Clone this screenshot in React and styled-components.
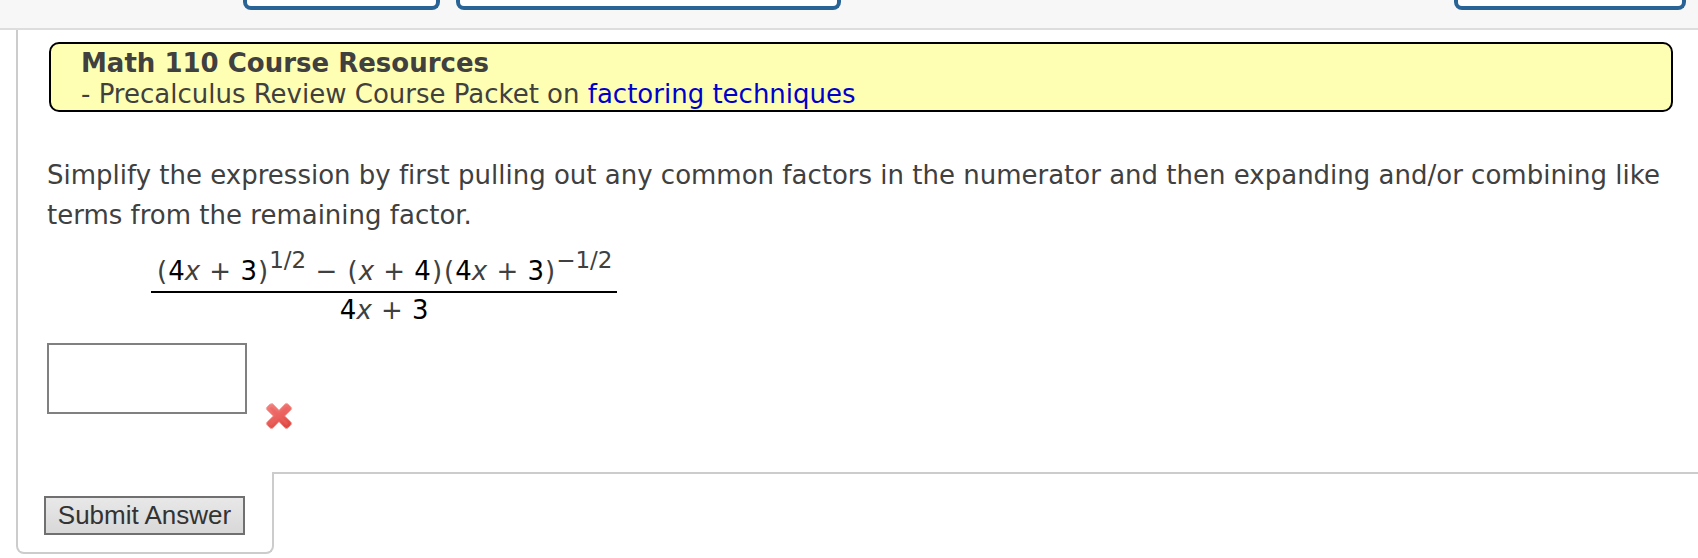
import { useState } from 'react';
import styled, { createGlobalStyle } from 'styled-components';

const colors = {
  text: '#404040',
  border: '#cccccc',
  accent: '#2a6496',
  link: '#0000cc',
};

const GlobalStyle = createGlobalStyle`
  *,
  *::before,
  *::after {
    box-sizing: border-box;
  }

  body {
    margin: 0;
    background: white;
    color: ${colors.text};
    font-family: Verdana, 'DejaVu Sans', sans-serif;
    font-size: 26px;
    font-variant-ligatures: none;
    line-height: 40px;
  }
`;

const Toolbar = styled.header`
  display: flex;
  align-items: flex-start;
  gap: 16px;
  height: 30px;
  padding: 0 12px 0 243px;
  background: #f7f7f7;
  border-bottom: 2px solid #dddddd;
`;

const ToolbarButton = styled.button`
  width: ${props => props.$width};
  height: 10px;
  padding: 0;
  margin-left: ${props => props.$alignEnd ? 'auto' : '0'};
  background: white;
  border: 4px solid ${colors.accent};
  border-top: none;
  border-radius: 0 0 8px 8px;
  cursor: pointer;
`;

const QuestionBody = styled.main`
  margin-left: 16px;
  padding: 12px 24px 42px 29px;
  border-left: 2px solid ${colors.border};
`;

const Resources = styled.aside`
  margin: 0 1px 0 2px;
  padding: 4px 30px 0;
  background: #ffffb3;
  border: 2px solid black;
  border-radius: 10px;
  line-height: 31px;
`;

const ResourceTitle = styled.div`
  font-weight: bold;
`;

const ResourceLink = styled.a`
  color: ${colors.link};
  text-decoration: none;
`;

const Prompt = styled.p`
  margin: 43px 0 10px;
`;

const Fraction = styled.div`
  display: inline-flex;
  flex-direction: column;
  align-items: center;
  margin-left: 104px;
  white-space: nowrap;
`;

const Numerator = styled.div`
  padding: 8px 5px 2px;
  border-bottom: 2px solid black;
  line-height: 36px;
`;

const Denominator = styled.div`
  line-height: 34px;
`;

const Num = styled.span`
  color: black;
`;

const Op = styled.span`
  margin: 0 1px;
`;

const Exponent = styled.sup`
  position: relative;
  top: -12px;
  font-size: 23px;
  line-height: 1;
  vertical-align: baseline;
`;

const AnswerRow = styled.div`
  display: flex;
  align-items: flex-end;
  gap: 18px;
  margin-top: 16px;
`;

const AnswerInput = styled.input`
  width: 200px;
  height: 71px;
  margin-bottom: 16px;
  padding: 4px 12px;
  background: white;
  border: 2px solid #808080;
  border-radius: 0;
  color: ${colors.text};
  font: inherit;
`;

const Footer = styled.footer`
  display: flex;
  align-items: stretch;
  margin-left: 16px;
`;

const SubmitTab = styled.div`
  padding: 24px 27px 17px 26px;
  border: 2px solid ${colors.border};
  border-top: none;
  border-radius: 0 0 8px 8px;
`;

const FooterRule = styled.div`
  flex: 1;
  height: 2px;
  margin-left: -2px;
  background: ${colors.border};
`;

const SubmitButton = styled.button`
  display: block;
  width: 201px;
  height: 39px;
  padding: 0 0 2px;
  background: linear-gradient(#e8e8e8, #d8d8d8);
  border: 2px solid #707070;
  border-radius: 0;
  color: #333333;
  font-family: Helvetica, 'Liberation Sans', sans-serif;
  font-size: 26px;
  line-height: 32px;
  cursor: pointer;
`;

function WrongMark() {
  return (
    <svg width="28" height="28" viewBox="0 0 28 28" role="img">
      <defs>
        <linearGradient id="wrong" x1="0" y1="0" x2="0.4" y2="1">
          <stop offset="0" stopColor="#f38582" />
          <stop offset="0.55" stopColor="#ec6663" />
          <stop offset="1" stopColor="#e04a43" />
        </linearGradient>
      </defs>
      <path
        d="M6 2Q7 1.2 8 2L14 8.2 20 2Q21.5 .8 23 2L26 5Q27.2 6.5 26 8L19.8 14 26 20Q27.2 21.5 26 23L23 26Q21.5 27.2 20 26L14 19.8 8 26Q6.5 27.2 5 26L2 23Q.8 21.5 2 20L8.2 14 2 8Q.8 6.5 2 5L5 2Z"
        fill="url(#wrong)"
        stroke="#f5a7a4"
        strokeWidth="1"
        strokeLinejoin="round"
      />
      <path
        d="M6.5 6.5 21.5 21.5M21.5 6.5 6.5 21.5"
        fill="none"
        stroke="#e9625f"
        strokeOpacity="0.5"
        strokeWidth="3"
        strokeLinecap="round"
      />
    </svg>
  );
}

function LinearTerm({ coefficient, constant }) {
  return (
    <>
      {coefficient && <Num>{coefficient}</Num>}
      <i>x</i> <Op>+</Op> <Num>{constant}</Num>
    </>
  );
}

// linear term in parentheses, e.g. (4x + 3)
function Factor(props) {
  return (
    <>
      <Op>(</Op><LinearTerm {...props} /><Op>)</Op>
    </>
  );
}

function App() {
  const [answer, setAnswer] = useState('');

  return (
    <>
      <GlobalStyle />
      <Toolbar>
        <ToolbarButton type="button" $width="197px" />
        <ToolbarButton type="button" $width="385px" />
        <ToolbarButton type="button" $width="232px" $alignEnd />
      </Toolbar>

      <QuestionBody>
        <Resources>
          <ResourceTitle>Math 110 Course Resources</ResourceTitle>
          <div>
            - Precalculus Review Course Packet on <ResourceLink href="#factoring">factoring techniques</ResourceLink>
          </div>
        </Resources>

        <Prompt id="prompt">
          Simplify the expression by first pulling out any common factors in the numerator and then expanding
          and/or combining like terms from the remaining factor.
        </Prompt>

        <Fraction>
          <Numerator>
            <Factor coefficient="4" constant="3" />
            <Exponent>1/2</Exponent> <Op>−</Op>{' '}
            <Factor constant="4" />
            <Factor coefficient="4" constant="3" />
            <Exponent>−1/2</Exponent>
          </Numerator>
          <Denominator>
            <LinearTerm coefficient="4" constant="3" />
          </Denominator>
        </Fraction>

        <AnswerRow>
          <AnswerInput
            type="text"
            aria-labelledby="prompt"
            value={answer}
            onChange={(e) => setAnswer(e.target.value)}
          />
          <WrongMark />
        </AnswerRow>
      </QuestionBody>

      <Footer>
        <SubmitTab>
          <SubmitButton type="button">Submit Answer</SubmitButton>
        </SubmitTab>
        <FooterRule />
      </Footer>
    </>
  );
}

export default App;
